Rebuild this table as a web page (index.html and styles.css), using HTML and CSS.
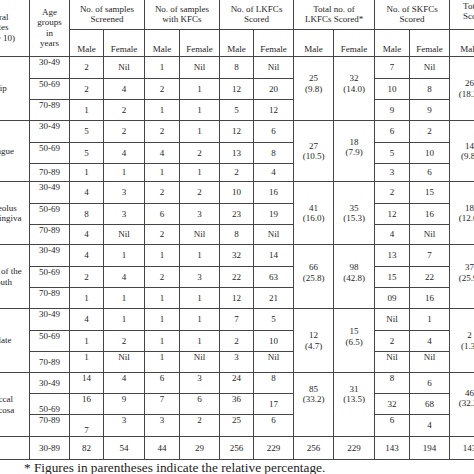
FILE: index.html
```html
<!DOCTYPE html>
<html lang="en">
<head>
<meta charset="utf-8">
<title>KFC table</title>
<link rel="stylesheet" href="styles.css">
</head>
<body>
<table class="kfc">
<colgroup>
<col class="w58"><col class="w40">
<col class="w34"><col class="w41">
<col class="w35"><col class="w40">
<col class="w34"><col class="w40">
<col class="w40"><col class="w41">
<col class="w35"><col class="w40">
<col class="w40"><col class="w40">
</colgroup>
<thead>
<tr class="h31">
<th rowspan="2" class="mid">Oral<br>sites<br>(n = 10)</th>
<th rowspan="2" class="mid">Age<br>groups<br>in<br>years</th>
<th colspan="2">No. of samples<br>Screened</th>
<th colspan="2">No. of samples<br>with KFCs</th>
<th colspan="2">No. of LKFCs<br>Scored</th>
<th colspan="2">Total no. of<br>LKFCs Scored*</th>
<th colspan="2">No. of SKFCs<br>Scored</th>
<th colspan="2" class="tot">Total no. of SKFCs<br>Scored</th>
</tr>
<tr class="h27 sub">
<th>Male</th><th>Female</th>
<th>Male</th><th>Female</th>
<th>Male</th><th>Female</th>
<th>Male</th><th>Female</th>
<th>Male</th><th>Female</th>
<th>Male</th><th>Female</th>
</tr>
</thead>
<tbody>
<tr class="h22">
<td rowspan="3">Lip</td>
<td class="t">30-49</td>
<td>2</td><td>Nil</td><td>1</td><td>Nil</td><td>8</td><td>Nil</td>
<td rowspan="3" class="up5">25<br>(9.8)</td><td rowspan="3" class="up5">32<br>(14.0)</td>
<td>7</td><td>Nil</td>
<td rowspan="3">26<br>(18.2)</td><td rowspan="3">17<br>(8.8)</td>
</tr>
<tr class="h21">
<td class="t">50-69</td>
<td>2</td><td>4</td><td>2</td><td>1</td><td>12</td><td>20</td>
<td>10</td><td>8</td>
</tr>
<tr class="h21">
<td class="t">70-89</td>
<td>1</td><td>2</td><td>1</td><td>1</td><td>5</td><td>12</td>
<td>9</td><td>9</td>
</tr>

<tr class="h22">
<td rowspan="3">Tongue</td>
<td class="t">30-49</td>
<td>5</td><td>2</td><td>2</td><td>1</td><td>12</td><td>6</td>
<td rowspan="3">27<br>(10.5)</td><td rowspan="3" class="up4">18<br>(7.9)</td>
<td>6</td><td>2</td>
<td rowspan="3">14<br>(9.8)</td><td rowspan="3">18<br>(9.3)</td>
</tr>
<tr class="h21">
<td class="t">50-69</td>
<td>5</td><td>4</td><td>4</td><td>2</td><td>13</td><td>8</td>
<td>5</td><td>10</td>
</tr>
<tr class="h18">
<td>70-89</td>
<td>1</td><td>1</td><td>1</td><td>1</td><td>2</td><td>4</td>
<td>3</td><td>6</td>
</tr>

<tr class="h22">
<td rowspan="3">Alveolus<br>and gingiva</td>
<td class="t">30-49</td>
<td>4</td><td>3</td><td>2</td><td>2</td><td>10</td><td>16</td>
<td rowspan="3">41<br>(16.0)</td><td rowspan="3">35<br>(15.3)</td>
<td>2</td><td>15</td>
<td rowspan="3">18<br>(12.6)</td><td rowspan="3">31<br>(16.0)</td>
</tr>
<tr class="h21">
<td class="t">50-69</td>
<td>8</td><td>3</td><td>6</td><td>3</td><td>23</td><td>19</td>
<td>12</td><td>16</td>
</tr>
<tr class="h20">
<td class="t">70-89</td>
<td>4</td><td>Nil</td><td>2</td><td>Nil</td><td>8</td><td>Nil</td>
<td>4</td><td>Nil</td>
</tr>

<tr class="h22">
<td rowspan="3">Floor of the<br>mouth</td>
<td class="t">30-49</td>
<td>4</td><td>1</td><td>1</td><td>1</td><td>32</td><td>14</td>
<td rowspan="3" class="up4">66<br>(25.8)</td><td rowspan="3" class="up4">98<br>(42.8)</td>
<td>13</td><td>7</td>
<td rowspan="3" class="up4">37<br>(25.9)</td><td rowspan="3" class="up4">45<br>(23.2)</td>
</tr>
<tr class="h21">
<td class="t">50-69</td>
<td>2</td><td>4</td><td>2</td><td>3</td><td>22</td><td>63</td>
<td>15</td><td>22</td>
</tr>
<tr class="h21">
<td class="t">70-89</td>
<td>1</td><td>1</td><td>1</td><td>1</td><td>12</td><td>21</td>
<td>09</td><td>16</td>
</tr>

<tr class="h22">
<td rowspan="3">Palate</td>
<td class="t">30-49</td>
<td>4</td><td>1</td><td>1</td><td>1</td><td>7</td><td>5</td>
<td rowspan="3">12<br>(4.7)</td><td rowspan="3" class="up4">15<br>(6.5)</td>
<td>Nil</td><td>1</td>
<td rowspan="3">2<br>(1.3)</td><td rowspan="3">5<br>(2.6)</td>
</tr>
<tr class="h21">
<td class="t">50-69</td>
<td>1</td><td>2</td><td>1</td><td>1</td><td>2</td><td>10</td>
<td>2</td><td>4</td>
</tr>
<tr class="h21">
<td>70-89</td>
<td class="t">1</td><td class="t">Nil</td><td class="t">1</td><td class="t">Nil</td><td class="t">3</td><td class="t">Nil</td>
<td class="t">Nil</td><td class="t">Nil</td>
</tr>

<tr class="h21">
<td rowspan="3">Buccal<br>mucosa</td>
<td>30-49</td>
<td class="t">14</td><td class="t">4</td><td class="t">6</td><td class="t">3</td><td class="t">24</td><td class="t">8</td>
<td rowspan="3" class="up10">85<br>(33.2)</td><td rowspan="3" class="up10">31<br>(13.5)</td>
<td class="t">8</td><td>6</td>
<td rowspan="3" class="up6">46<br>(32.2)</td><td rowspan="3">78<br>(40.2)</td>
</tr>
<tr class="h21">
<td class="b">50-69</td>
<td class="t">16</td><td class="t">9</td><td class="t">7</td><td class="t">6</td><td class="t">36</td><td>17</td>
<td>32</td><td>68</td>
</tr>
<tr class="h22">
<td class="t">70-89</td>
<td class="b1">7</td><td class="t">3</td><td class="t">3</td><td class="t">2</td><td class="t">25</td><td class="t">6</td>
<td class="t">6</td><td>4</td>
</tr>

<tr class="h23">
<td></td>
<td>30-89</td>
<td>82</td><td>54</td><td>44</td><td>29</td><td>256</td><td>229</td>
<td>256</td><td>229</td>
<td>143</td><td>194</td>
<td>143</td><td>194</td>
</tr>
</tbody>
</table>
<p class="note">* Figures in parentheses indicate the relative percentage.</p>
</body>
</html>
```

FILE: styles.css
```css
html, body {
  margin: 0;
  padding: 0;
  background: #ffffff;
  overflow: hidden;
  width: 474px;
  height: 474px;
}

body {
  font-family: "Liberation Serif", "Times New Roman", serif;
  color: #262626;
}

.kfc {
  border-collapse: collapse;
  table-layout: fixed;
  width: 558px;
  margin-left: -29px;
  margin-top: -2px;
  font-size: 9px;
  line-height: 10.5px;
}

.w58 { width: 58px; }
.w40 { width: 40px; }
.w34 { width: 34px; }
.w41 { width: 41px; }
.w35 { width: 35px; }

.kfc th,
.kfc td {
  border: 1px solid #454545;
  padding: 0;
  text-align: center;
  vertical-align: middle;
  font-weight: normal;
  white-space: nowrap;
  overflow: hidden;
}

.h31 { height: 31px; }
.h27 { height: 27px; }
.h23 { height: 23px; }
.h22 { height: 22px; }
.h21 { height: 21px; }
.h20 { height: 20px; }
.h18 { height: 18px; }

.sub th {
  vertical-align: bottom;
  padding-bottom: 2px;
}

.kfc th.mid {
  vertical-align: middle;
}

.kfc th.tot {
  text-align: left;
  padding-left: 13px;
  padding-bottom: 6px;
}

.kfc td.t {
  vertical-align: top;
}

.kfc td.b {
  vertical-align: bottom;
}

.kfc td.b1 {
  vertical-align: bottom;
  padding-bottom: 1px;
}

.kfc td.up4 { padding-bottom: 8px; }
.kfc td.up5 { padding-bottom: 10px; }
.kfc td.up6 { padding-bottom: 13px; }
.kfc td.up10 { padding-bottom: 21px; }

.note {
  margin: 0;
  padding-left: 24px;
  font-size: 13.3px;
  line-height: 15px;
  white-space: nowrap;
  color: #222222;
}
```
